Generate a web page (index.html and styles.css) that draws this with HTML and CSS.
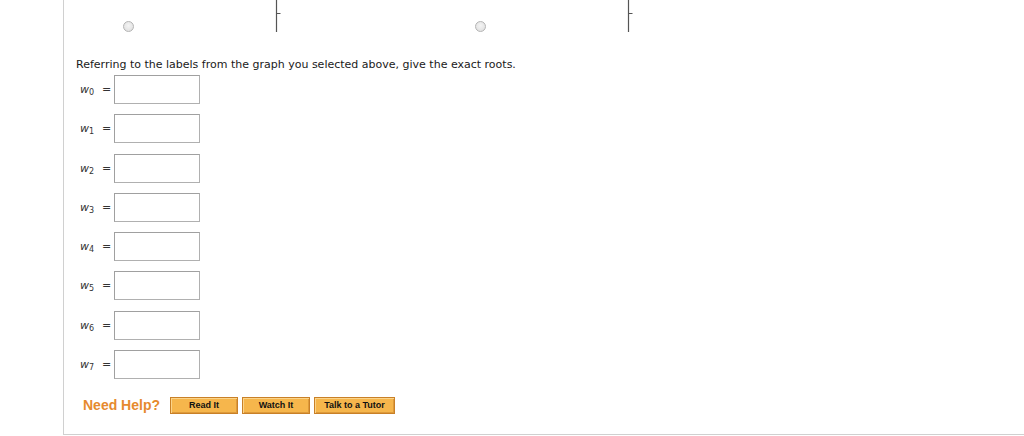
FILE: index.html
```html
<!DOCTYPE html>
<html>
<head>
<meta charset="utf-8">
<link rel="stylesheet" href="styles.css">
</head>
<body>
<div class="panel">
  <div class="choices">
    <div class="choice">
      <span class="radio"></span>
      <svg class="graph" width="160" height="33" viewBox="0 0 160 33"><line x1="143.5" y1="0" x2="143.5" y2="32" stroke="#555" stroke-width="1.2"/><line x1="143.5" y1="13.5" x2="147.5" y2="13.5" stroke="#555" stroke-width="1"/></svg>
    </div>
    <div class="choice">
      <span class="radio"></span>
      <svg class="graph" width="160" height="33" viewBox="0 0 160 33"><line x1="143.5" y1="0" x2="143.5" y2="32" stroke="#555" stroke-width="1.2"/><line x1="143.5" y1="13.5" x2="147.5" y2="13.5" stroke="#555" stroke-width="1"/></svg>
    </div>
  </div>
  <p class="prompt">Referring to the labels from the graph you selected above, give the exact roots.</p>
  <div class="answers">
    <div class="row"><span class="lbl"><i>w</i><sub>0</sub></span><span class="eq">=</span><input class="box" type="text"></div>
    <div class="row"><span class="lbl"><i>w</i><sub>1</sub></span><span class="eq">=</span><input class="box" type="text"></div>
    <div class="row"><span class="lbl"><i>w</i><sub>2</sub></span><span class="eq">=</span><input class="box" type="text"></div>
    <div class="row"><span class="lbl"><i>w</i><sub>3</sub></span><span class="eq">=</span><input class="box" type="text"></div>
    <div class="row"><span class="lbl"><i>w</i><sub>4</sub></span><span class="eq">=</span><input class="box" type="text"></div>
    <div class="row"><span class="lbl"><i>w</i><sub>5</sub></span><span class="eq">=</span><input class="box" type="text"></div>
    <div class="row"><span class="lbl"><i>w</i><sub>6</sub></span><span class="eq">=</span><input class="box" type="text"></div>
    <div class="row"><span class="lbl"><i>w</i><sub>7</sub></span><span class="eq">=</span><input class="box" type="text"></div>
  </div>
  <div class="help">
    <span class="need">Need Help?</span>
    <span class="btn btn-read">Read It</span>
    <span class="btn btn-watch">Watch It</span>
    <span class="btn btn-tutor">Talk to a Tutor</span>
  </div>
</div>
</body>
</html>
```
FILE: styles.css
```css
html, body {
  margin: 0;
  padding: 0;
  background: #fff;
}
body {
  font-family: "DejaVu Sans", Verdana, sans-serif;
  font-size: 11px;
  color: #222;
}
.panel {
  margin-left: 63px;
  height: 435px;
  box-sizing: border-box;
  border-left: 1px solid #d0d0d0;
  border-bottom: 1px solid #d0d0d0;
  padding-left: 12px;
}
.choices {
  display: flex;
  height: 33px;
}
.choice {
  width: 352px;
  display: flex;
  align-items: flex-end;
}
.radio {
  width: 9px;
  height: 9px;
  margin-left: 47px;
  margin-bottom: 1px;
  border: 1px solid #b4b4b4;
  border-radius: 50%;
  background: radial-gradient(circle at 50% 40%, #f4f4f4, #dcdcdc);
  flex: none;
}
.graph {
  display: block;
  flex: none;
  margin-left: -1px;
}
.prompt {
  margin: 25px 0 0 0;
  line-height: 14px;
  color: #1a1a1a;
}
.answers {
  display: flex;
  flex-direction: column;
  gap: 10.3px;
  margin-top: 3px;
}
.row {
  display: flex;
  align-items: center;
  height: 29px;
}
.lbl {
  width: 22px;
  padding-left: 4px;
  color: #333;
  font-size: 11px;
}
.lbl i {
  font-style: italic;
}
.lbl sub {
  font-size: 8px;
  vertical-align: -2px;
  line-height: 0;
}
.eq {
  width: 12px;
  color: #333;
}
.box {
  width: 86px;
  height: 29px;
  box-sizing: border-box;
  margin: 0;
  padding: 0;
  border: 1px solid #b0b0b0;
  border-top-color: #a0a0a0;
  border-left-color: #a0a0a0;
  background: #fff;
}
.help {
  display: flex;
  align-items: center;
  margin-top: 17px;
  padding-left: 7px;
  height: 18px;
}
.need {
  font-family: "Liberation Sans", Arial, sans-serif;
  font-weight: bold;
  font-size: 14px;
  color: #e68a2e;
  margin-right: 10px;
}
.btn {
  box-sizing: border-box;
  height: 17px;
  display: flex;
  align-items: center;
  justify-content: center;
  font-family: "Liberation Sans", Arial, sans-serif;
  font-weight: bold;
  font-size: 9px;
  color: #111;
  background: #f6b64c;
  border: 1px solid #c98027;
  box-shadow: inset 1px 1px 0 #fbd48a, inset -1px -1px 0 #dd9a3b;
  margin-right: 4px;
}
.btn-read { width: 68px; }
.btn-watch { width: 68px; }
.btn-tutor { width: 81px; }
```
